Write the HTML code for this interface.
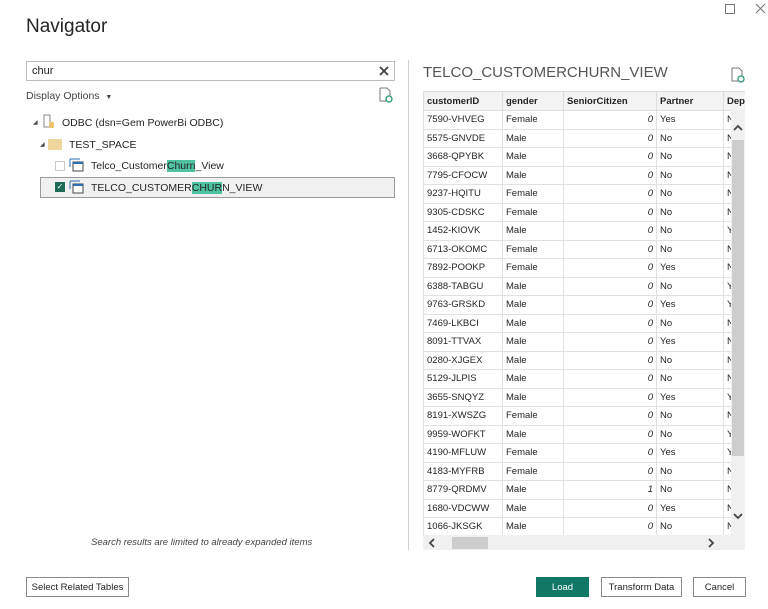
<!DOCTYPE html>
<html><head><meta charset="utf-8"><style>
*{margin:0;padding:0;box-sizing:border-box}
body{width:768px;height:609px;background:#fff;font-family:"Liberation Sans",sans-serif;color:#252423;position:relative;overflow:hidden}
.abs{position:absolute}
.t{font-size:10px}
table{border-collapse:collapse;table-layout:fixed}
td{height:18.5px;border:1px solid #e1e1e1;font-size:9.5px;padding:0 3px;white-space:nowrap;overflow:hidden}
th{height:19px;border:1px solid #dcdcdc;background:#f3f3f3;font-size:9.5px;text-align:left;padding:0 3px;font-weight:bold;white-space:nowrap;overflow:hidden}
td.n{text-align:right;font-style:italic}
.btn{position:absolute;top:577px;height:20px;border:1px solid #8a8a8a;font-size:9.5px;display:flex;align-items:center;justify-content:center;background:#fff}
.hl{background:#4fc3a1}
</style></head><body>
<div class="abs" style="left:26px;top:16px;font-size:19px;color:#252423">Navigator</div>
<div class="abs" style="left:725px;top:4px;width:10px;height:10px;border:1px solid #777"></div>
<svg class="abs" style="left:755px;top:3px" width="11" height="11"><path d="M1 1l9 9M10 1l-9 9" stroke="#777" stroke-width="1.1"/></svg>

<div class="abs" style="left:26px;top:61px;width:369px;height:20px;border:1px solid #bdbdbd"></div>
<div class="abs t" style="left:32px;top:65px;font-size:11px">chur</div>
<svg class="abs" style="left:379px;top:66px" width="10" height="10"><path d="M1 1l8 8M9 1l-8 8" stroke="#444" stroke-width="1.8"/></svg>
<div class="abs t" style="left:26px;top:90px;color:#444;font-size:10.5px">Display Options &nbsp;<span style="font-size:7px">▼</span></div>
<svg class="abs" style="left:379px;top:87px" width="14" height="16"><path d="M1 1h7l3 3v5M1 1v13h6" fill="none" stroke="#777"/><circle cx="10" cy="12" r="3" fill="none" stroke="#2a9d6e" stroke-width="1.3"/></svg>

<div class="abs" style="left:33px;top:119px;font-size:6px;color:#444">◢</div>
<svg class="abs" style="left:43px;top:114px" width="12" height="16"><rect x="1" y="1" width="6" height="12" fill="none" stroke="#888"/><rect x="6" y="8" width="5" height="6" rx="1" fill="#e8c26f"/></svg>
<div class="abs t" style="left:62px;top:117px;font-size:10.5px">ODBC (dsn=Gem PowerBi ODBC)</div>
<div class="abs" style="left:40px;top:141px;font-size:6px;color:#444">◢</div>
<div class="abs" style="left:48px;top:139px;width:14px;height:11px;background:#efd49b;border-radius:1px"></div>
<div class="abs t" style="left:69px;top:139px;font-size:10.5px">TEST_SPACE</div>
<div class="abs" style="left:55px;top:161px;width:10px;height:10px;border:1px solid #c8c8c8"></div>
<svg class="abs" style="left:69px;top:158px" width="15" height="14"><path d="M1 1h10M1 1v8" stroke="#2b6fb5" fill="none"/><rect x="4" y="4" width="10" height="9" fill="#fff" stroke="#444"/><path d="M4 5h10" stroke="#2b6fb5" stroke-width="2"/></svg>
<div class="abs t" style="left:91px;top:160px;font-size:10.5px">Telco_Customer<span class="hl">Churn</span>_View</div>
<div class="abs" style="left:40px;top:177px;width:355px;height:21px;border:1px solid #9a9a9a;background:#f0f0f0"></div>
<div class="abs" style="left:55px;top:182px;width:10px;height:10px;background:#1e6b58;color:#fff;font-size:8px;line-height:10px;text-align:center">✓</div>
<svg class="abs" style="left:69px;top:180px" width="15" height="14"><path d="M1 1h10M1 1v8" stroke="#2b6fb5" fill="none"/><rect x="4" y="4" width="10" height="9" fill="#fff" stroke="#444"/><path d="M4 5h10" stroke="#2b6fb5" stroke-width="2"/></svg>
<div class="abs t" style="left:91px;top:182px;font-size:10.5px">TELCO_CUSTOMER<span class="hl">CHUR</span>N_VIEW</div>

<div class="abs" style="left:91px;top:537px;font-size:9.5px;font-style:italic;color:#444">Search results are limited to already expanded items</div>
<div class="abs" style="left:408px;top:60px;width:1px;height:490px;background:#d0d0d0"></div>

<div class="abs" style="left:423px;top:64px;font-size:15px;color:#555">TELCO_CUSTOMERCHURN_VIEW</div>
<svg class="abs" style="left:731px;top:67px" width="14" height="16"><path d="M1 1h7l3 3v5M1 1v13h6" fill="none" stroke="#777"/><circle cx="10" cy="12" r="3" fill="none" stroke="#2a9d6e" stroke-width="1.3"/></svg>

<div class="abs" style="left:423px;top:91px;width:322px;height:459px;background:#f0f0f0;overflow:hidden">
<table style="width:360px">
<colgroup><col style="width:79px"><col style="width:61px"><col style="width:93px"><col style="width:67px"><col style="width:60px"></colgroup>
<tr><th>customerID</th><th>gender</th><th>SeniorCitizen</th><th>Partner</th><th>Depe</th></tr>
<tbody style="background:#fff">
<tr><td>7590-VHVEG</td><td>Female</td><td class="n">0</td><td>Yes</td><td>N</td></tr>
<tr><td>5575-GNVDE</td><td>Male</td><td class="n">0</td><td>No</td><td>N</td></tr>
<tr><td>3668-QPYBK</td><td>Male</td><td class="n">0</td><td>No</td><td>N</td></tr>
<tr><td>7795-CFOCW</td><td>Male</td><td class="n">0</td><td>No</td><td>N</td></tr>
<tr><td>9237-HQITU</td><td>Female</td><td class="n">0</td><td>No</td><td>N</td></tr>
<tr><td>9305-CDSKC</td><td>Female</td><td class="n">0</td><td>No</td><td>N</td></tr>
<tr><td>1452-KIOVK</td><td>Male</td><td class="n">0</td><td>No</td><td>Y</td></tr>
<tr><td>6713-OKOMC</td><td>Female</td><td class="n">0</td><td>No</td><td>N</td></tr>
<tr><td>7892-POOKP</td><td>Female</td><td class="n">0</td><td>Yes</td><td>N</td></tr>
<tr><td>6388-TABGU</td><td>Male</td><td class="n">0</td><td>No</td><td>Y</td></tr>
<tr><td>9763-GRSKD</td><td>Male</td><td class="n">0</td><td>Yes</td><td>Y</td></tr>
<tr><td>7469-LKBCI</td><td>Male</td><td class="n">0</td><td>No</td><td>N</td></tr>
<tr><td>8091-TTVAX</td><td>Male</td><td class="n">0</td><td>Yes</td><td>N</td></tr>
<tr><td>0280-XJGEX</td><td>Male</td><td class="n">0</td><td>No</td><td>N</td></tr>
<tr><td>5129-JLPIS</td><td>Male</td><td class="n">0</td><td>No</td><td>N</td></tr>
<tr><td>3655-SNQYZ</td><td>Male</td><td class="n">0</td><td>Yes</td><td>Y</td></tr>
<tr><td>8191-XWSZG</td><td>Female</td><td class="n">0</td><td>No</td><td>N</td></tr>
<tr><td>9959-WOFKT</td><td>Male</td><td class="n">0</td><td>No</td><td>Y</td></tr>
<tr><td>4190-MFLUW</td><td>Female</td><td class="n">0</td><td>Yes</td><td>Y</td></tr>
<tr><td>4183-MYFRB</td><td>Female</td><td class="n">0</td><td>No</td><td>N</td></tr>
<tr><td>8779-QRDMV</td><td>Male</td><td class="n">1</td><td>No</td><td>N</td></tr>
<tr><td>1680-VDCWW</td><td>Male</td><td class="n">0</td><td>Yes</td><td>N</td></tr>
<tr><td>1066-JKSGK</td><td>Male</td><td class="n">0</td><td>No</td><td>N</td></tr>
</tbody></table>
</div>
<div class="abs" style="left:731px;top:110px;width:14px;height:425px;background:#f0f0f0"></div>
<div class="abs" style="left:732px;top:140px;width:12px;height:316px;background:#cdcdcd"></div>
<svg class="abs" style="left:733px;top:124px" width="10" height="7"><path d="M1 6l4-4 4 4" fill="none" stroke="#444" stroke-width="1.8"/></svg>
<svg class="abs" style="left:733px;top:513px" width="10" height="7"><path d="M1 1l4 4 4-4" fill="none" stroke="#444" stroke-width="1.8"/></svg>
<div class="abs" style="left:423px;top:535px;width:322px;height:15px;background:#f0f0f0"></div>
<div class="abs" style="left:452px;top:537px;width:36px;height:12px;background:#cdcdcd"></div>
<svg class="abs" style="left:428px;top:538px" width="7" height="10"><path d="M6 1L2 5l4 4" fill="none" stroke="#444" stroke-width="1.8"/></svg>
<svg class="abs" style="left:708px;top:538px" width="7" height="10"><path d="M1 1l4 4-4 4" fill="none" stroke="#444" stroke-width="1.8"/></svg>

<div class="btn" style="left:26px;width:103px">Select Related Tables</div>
<div class="btn" style="left:536px;width:53px;background:#117865;border-color:#117865;color:#fff">Load</div>
<div class="btn" style="left:601px;width:81px">Transform Data</div>
<div class="btn" style="left:693px;width:53px">Cancel</div>
</body></html>
